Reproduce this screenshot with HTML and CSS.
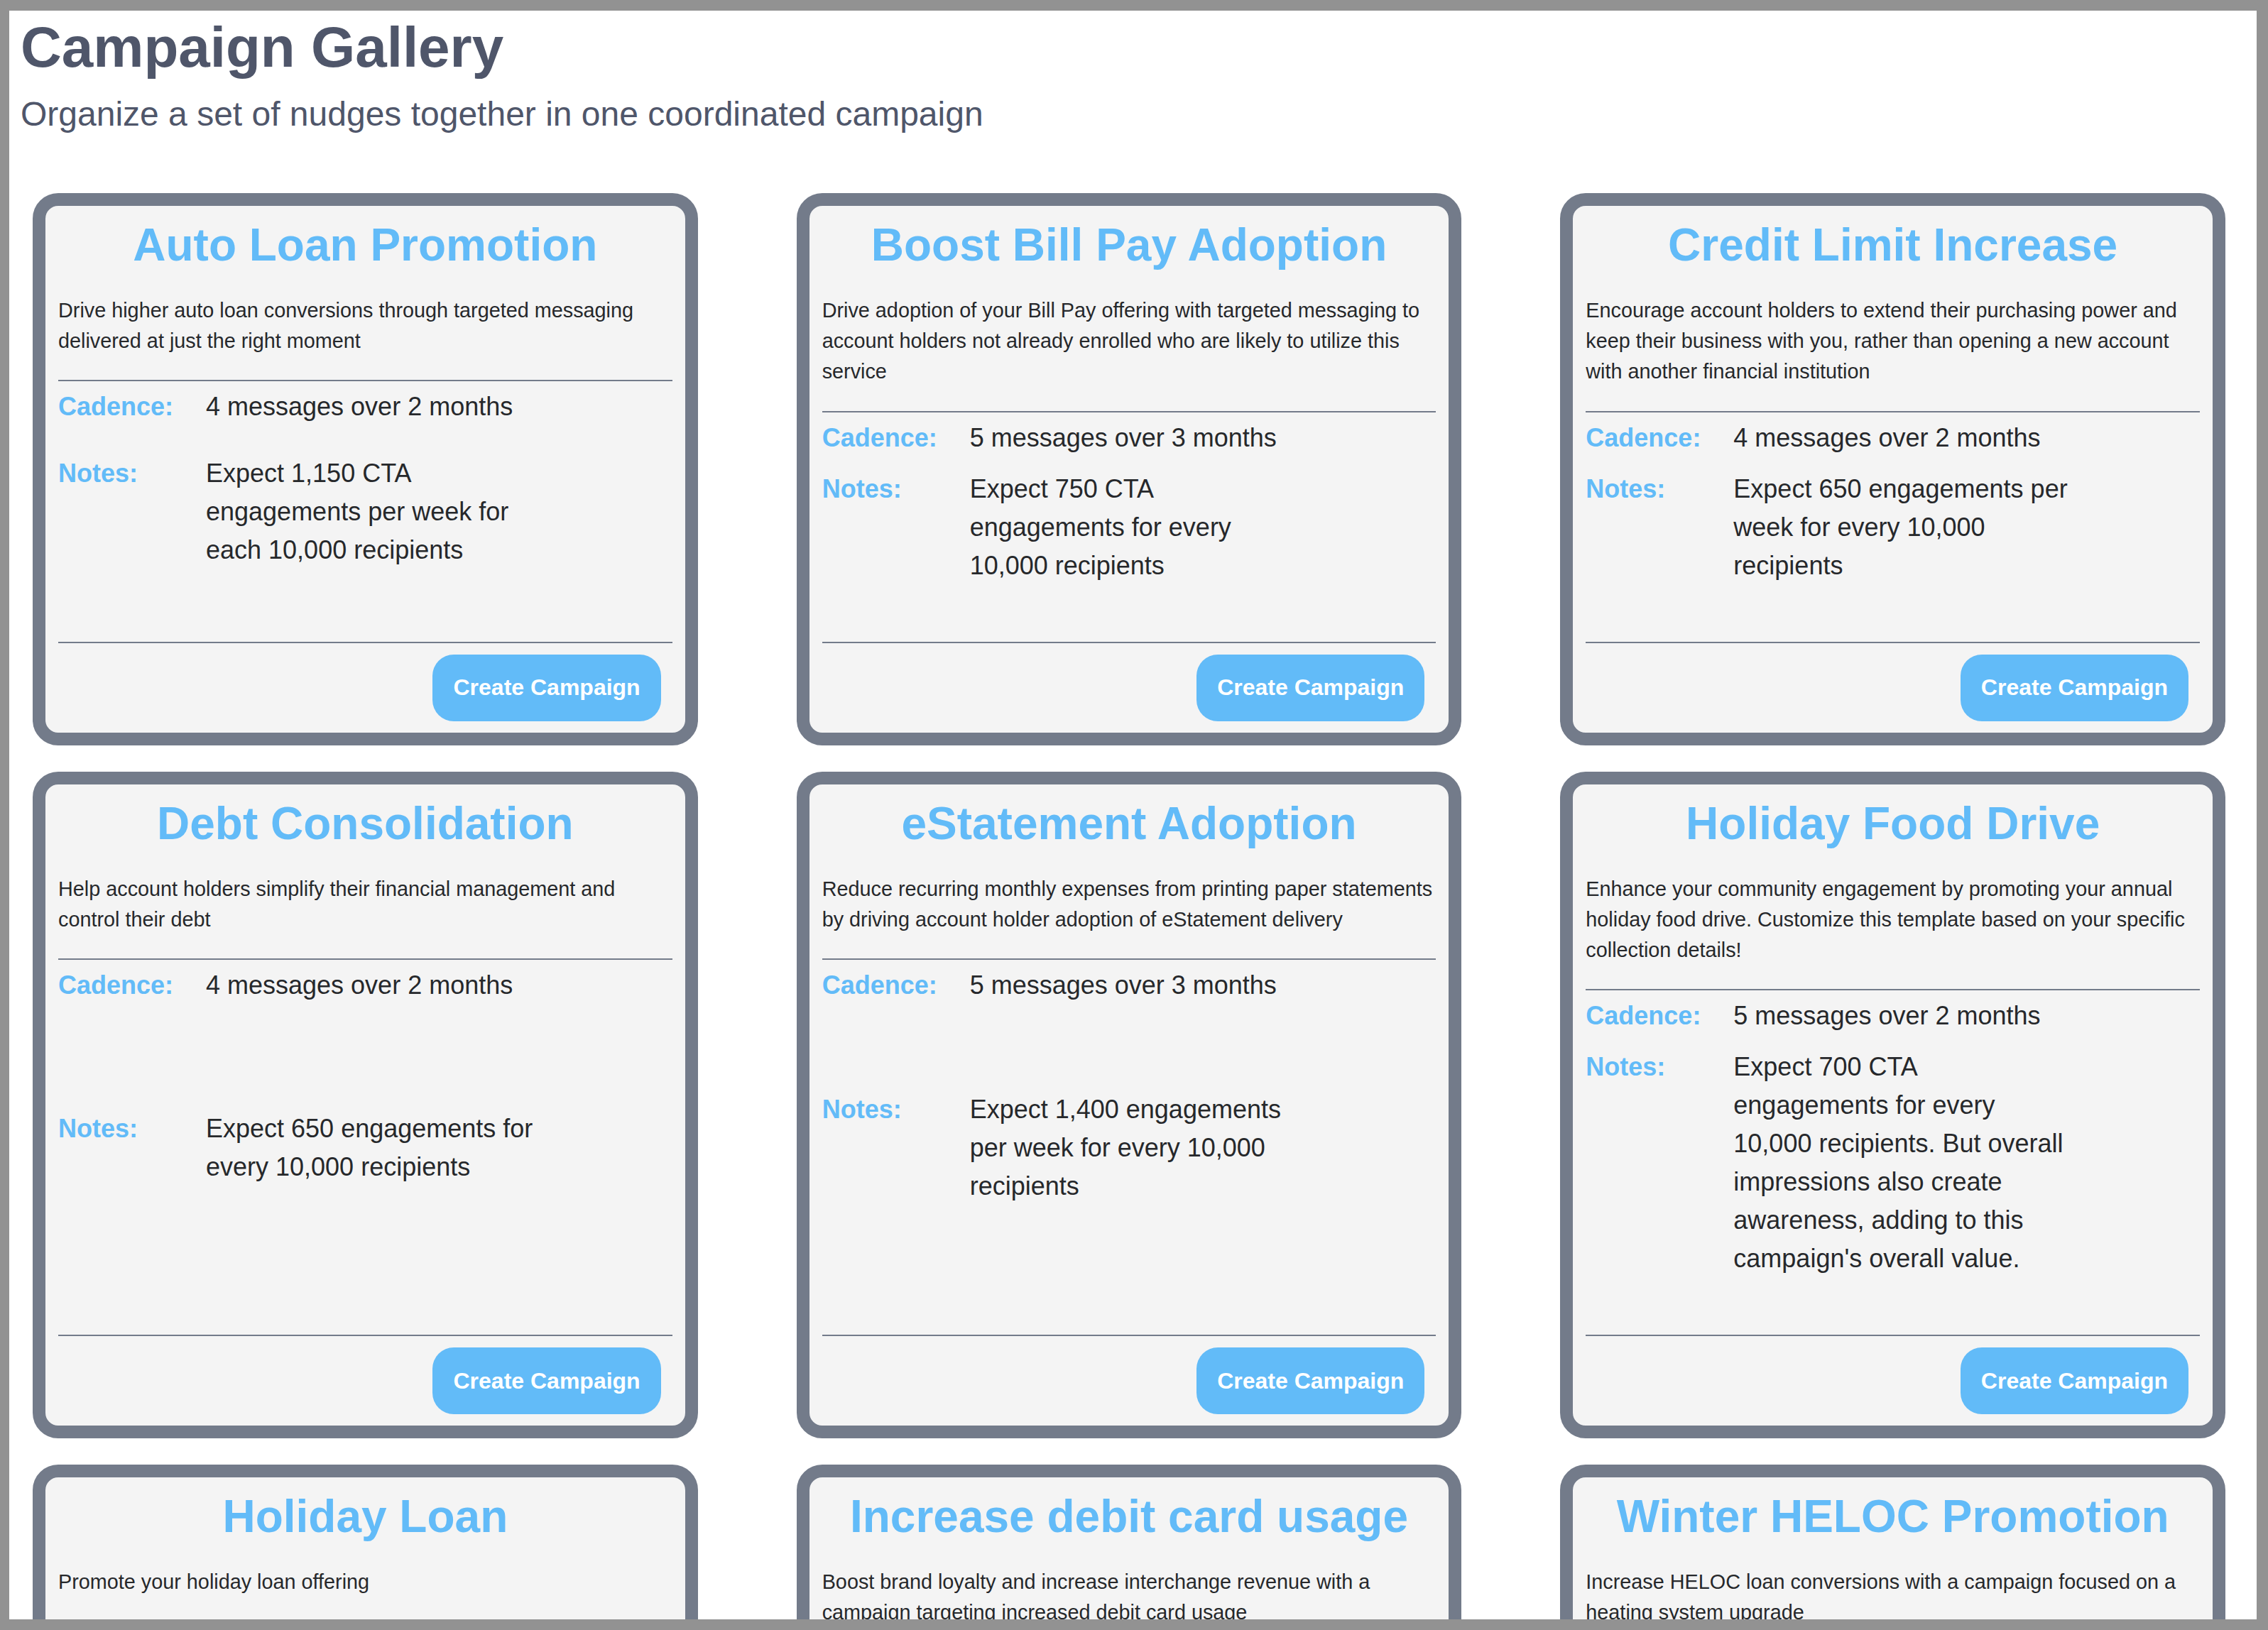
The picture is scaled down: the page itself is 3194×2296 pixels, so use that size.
FILE: index.html
```html
<!DOCTYPE html>
<html lang="en">
<head>
<meta charset="utf-8">
<title>Campaign Gallery</title>
<link rel="stylesheet" href="styles.css">
</head>
<body>
<div class="frame">
  <header class="page-head">
    <h1 class="page-title">Campaign Gallery</h1>
    <p class="page-subtitle">Organize a set of nudges together in one coordinated campaign</p>
  </header>

  <main class="gallery">
    <article class="card">
      <h2 class="card-title">Auto Loan Promotion</h2>
      <p class="card-desc">Drive higher auto loan conversions through targeted messaging delivered at just the right moment</p>
      <dl class="card-details">
        <dt>Cadence:</dt><dd>4 messages over 2 months</dd>
        <dt>Notes:</dt><dd>Expect 1,150 CTA engagements per week for each 10,000 recipients</dd>
      </dl>
      <div class="card-foot"><button class="btn">Create Campaign</button></div>
    </article>

    <article class="card">
      <h2 class="card-title">Boost Bill Pay Adoption</h2>
      <p class="card-desc">Drive adoption of your Bill Pay offering with targeted messaging to account holders not already enrolled who are likely to utilize this service</p>
      <dl class="card-details">
        <dt>Cadence:</dt><dd>5 messages over 3 months</dd>
        <dt>Notes:</dt><dd>Expect 750 CTA engagements for every 10,000 recipients</dd>
      </dl>
      <div class="card-foot"><button class="btn">Create Campaign</button></div>
    </article>

    <article class="card">
      <h2 class="card-title">Credit Limit Increase</h2>
      <p class="card-desc">Encourage account holders to extend their purchasing power and keep their business with you, rather than opening a new account with another financial institution</p>
      <dl class="card-details">
        <dt>Cadence:</dt><dd>4 messages over 2 months</dd>
        <dt>Notes:</dt><dd>Expect 650 engagements per week for every 10,000 recipients</dd>
      </dl>
      <div class="card-foot"><button class="btn">Create Campaign</button></div>
    </article>

    <article class="card">
      <h2 class="card-title">Debt Consolidation</h2>
      <p class="card-desc">Help account holders simplify their financial management and control their debt</p>
      <dl class="card-details">
        <dt>Cadence:</dt><dd>4 messages over 2 months</dd>
        <dt>Notes:</dt><dd>Expect 650 engagements for every 10,000 recipients</dd>
      </dl>
      <div class="card-foot"><button class="btn">Create Campaign</button></div>
    </article>

    <article class="card">
      <h2 class="card-title">eStatement Adoption</h2>
      <p class="card-desc">Reduce recurring monthly expenses from printing paper statements by driving account holder adoption of eStatement delivery</p>
      <dl class="card-details">
        <dt>Cadence:</dt><dd>5 messages over 3 months</dd>
        <dt>Notes:</dt><dd>Expect 1,400 engagements per week for every 10,000 recipients</dd>
      </dl>
      <div class="card-foot"><button class="btn">Create Campaign</button></div>
    </article>

    <article class="card">
      <h2 class="card-title">Holiday Food Drive</h2>
      <p class="card-desc">Enhance your community engagement by promoting your annual holiday food drive. Customize this template based on your specific collection details!</p>
      <dl class="card-details">
        <dt>Cadence:</dt><dd>5 messages over 2 months</dd>
        <dt>Notes:</dt><dd>Expect 700 CTA engagements for every 10,000 recipients. But overall impressions also create awareness, adding to this campaign's overall value.</dd>
      </dl>
      <div class="card-foot"><button class="btn">Create Campaign</button></div>
    </article>

    <article class="card">
      <h2 class="card-title">Holiday Loan</h2>
      <p class="card-desc">Promote your holiday loan offering</p>
      <dl class="card-details">
        <dt>Cadence:</dt><dd>4 messages over 2 months</dd>
        <dt>Notes:</dt><dd>Expect 600 engagements for every 10,000 recipients</dd>
      </dl>
      <div class="card-foot"><button class="btn">Create Campaign</button></div>
    </article>

    <article class="card">
      <h2 class="card-title">Increase debit card usage</h2>
      <p class="card-desc">Boost brand loyalty and increase interchange revenue with a campaign targeting increased debit card usage</p>
      <dl class="card-details">
        <dt>Cadence:</dt><dd>4 messages over 2 months</dd>
        <dt>Notes:</dt><dd>Expect 800 engagements for every 10,000 recipients</dd>
      </dl>
      <div class="card-foot"><button class="btn">Create Campaign</button></div>
    </article>

    <article class="card">
      <h2 class="card-title">Winter HELOC Promotion</h2>
      <p class="card-desc">Increase HELOC loan conversions with a campaign focused on a heating system upgrade</p>
      <dl class="card-details">
        <dt>Cadence:</dt><dd>4 messages over 2 months</dd>
        <dt>Notes:</dt><dd>Expect 500 engagements for every 10,000 recipients</dd>
      </dl>
      <div class="card-foot"><button class="btn">Create Campaign</button></div>
    </article>
  </main>
</div>
</body>
</html>
```

FILE: styles.css
```css
html, body {
  margin: 0;
  padding: 0;
  background: #929292;
}

body {
  font-family: "Liberation Sans", Arial, Helvetica, sans-serif;
}

.frame {
  box-sizing: border-box;
  height: 100vh;
  border-style: solid;
  border-color: #929292;
  border-width: 15px 16px 15px 13px;
  background: #ffffff;
  overflow: hidden;
  padding: 6px 16px 0 16px;
}

.page-title {
  margin: 0;
  font-size: 80px;
  line-height: normal;
  font-weight: 700;
  color: #4f566a;
}

.page-subtitle {
  margin: 20px 0 0;
  font-size: 48px;
  line-height: normal;
  color: #4f566a;
}

.gallery {
  margin-top: 84px;
  padding: 0 28px 0 17px;
  display: grid;
  grid-template-columns: repeat(3, 1fr);
  column-gap: 139px;
  row-gap: 37px;
}

.card {
  display: flex;
  flex-direction: column;
  background: #f4f4f4;
  border: 18px solid #737b8a;
  border-radius: 36px;
  padding: 0 18px;
  min-width: 0;
}

.card-title {
  margin: 18px 0 0;
  text-align: center;
  font-size: 64px;
  line-height: normal;
  font-weight: 700;
  color: #62bbf8;
}

.card-desc {
  margin: 34px 0 0;
  font-size: 28.8px;
  line-height: 1.5;
  color: #26282b;
  padding-bottom: 33px;
  border-bottom: 2px solid #737b8a;
}

.card-details {
  flex: 1;
  margin: 0;
  padding: 9px 0 80px;
  display: grid;
  grid-template-columns: 208px 480px;
  row-gap: 18px;
  align-content: normal;
  font-size: 36px;
  line-height: 54px;
}

.card-details dt {
  font-weight: 700;
  color: #62bbf8;
}

.card-details dd {
  margin: 0;
  color: #26282b;
}

.card-foot {
  border-top: 2px solid #737b8a;
  padding: 16px;
  display: flex;
  justify-content: flex-end;
}

.btn {
  height: 94px;
  padding: 0 29px;
  border: none;
  border-radius: 30px;
  background: #62bbf8;
  color: #ffffff;
  font-family: "Liberation Sans", Arial, Helvetica, sans-serif;
  font-size: 32px;
  font-weight: 700;
  cursor: pointer;
}
```
